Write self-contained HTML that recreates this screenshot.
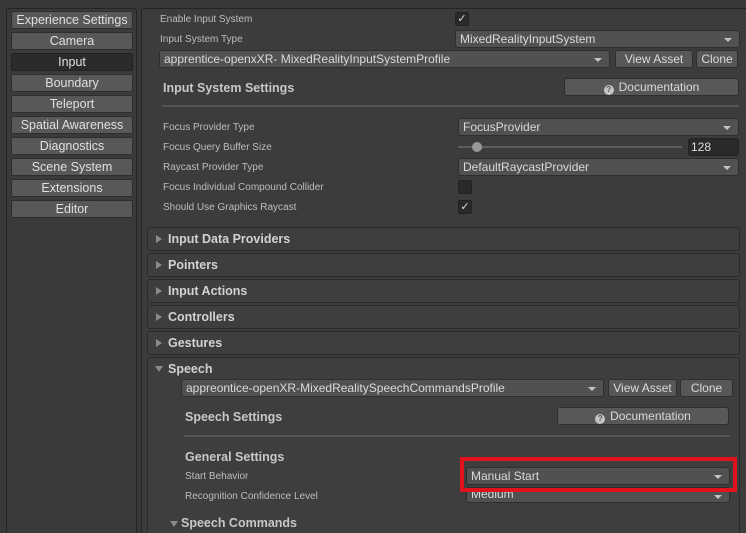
<!DOCTYPE html><html><head><style>
html,body{margin:0;width:746px;height:533px;overflow:hidden}
body{background:#383838;font-family:"Liberation Sans",sans-serif;position:relative;color:#c4c4c4}
.a{position:absolute;box-sizing:border-box}
.lp{left:6px;top:8px;width:131px;height:535px;border:1px solid #242424;background:#3a3a3a;border-radius:3px}
.nb{left:11px;width:122px;height:18px;background:#585858;border:1px solid #2e2e2e;border-radius:2px;font-size:12.5px;text-align:center;line-height:16px;color:#e0e0e0}
.rp{left:141px;top:8px;width:610px;height:535px;border:1px solid #242424;background:#3c3c3c;border-radius:3px}
.lb{font-size:10px;color:#bdbdbd}
.dd{height:18px;background:#515151;border:1px solid #2e2e2e;border-radius:3px;font-size:12px;line-height:16px;padding-left:4px;color:#dadada}
.dd:after{content:"";position:absolute;right:7px;top:7px;border-left:4px solid transparent;border-right:4px solid transparent;border-top:4px solid #c4c4c4}
.bt{height:18px;background:#585858;border:1px solid #2e2e2e;border-radius:3px;font-size:12px;line-height:16px;text-align:center;color:#dadada}
.cb{width:14px;height:14px;background:#2a2a2a;border:1px solid #222;border-radius:2px;color:#ddd;font-size:11px;line-height:12px;text-align:center}
.h{font-size:12.5px;font-weight:bold;color:#c8c8c8}
.hr{height:2px;background:#555}
.fo{left:147px;width:593px;height:24px;border:1px solid #2a2a2a;border-radius:3px;background:#3e3e3e;font-size:12.5px;font-weight:bold;color:#d2d2d2;line-height:22px;padding-left:20px}
.tri{position:absolute;left:8px;top:7px;border-top:4px solid transparent;border-bottom:4px solid transparent;border-left:6px solid #8a8a8a}
.q{display:inline-block;width:10px;height:10px;border-radius:50%;background:#c4c4c4;color:#585858;font-size:8px;line-height:10px;font-weight:bold;margin-right:5px;vertical-align:-1px}
</style></head><body>
<div class="a lp"></div>
<div class="a nb" style="top:11px">Experience Settings</div>
<div class="a nb" style="top:32px">Camera</div>
<div class="a nb" style="top:53px;background:#2b2b2b;border-color:#222">Input</div>
<div class="a nb" style="top:74px">Boundary</div>
<div class="a nb" style="top:95px">Teleport</div>
<div class="a nb" style="top:116px">Spatial Awareness</div>
<div class="a nb" style="top:137px">Diagnostics</div>
<div class="a nb" style="top:158px">Scene System</div>
<div class="a nb" style="top:179px">Extensions</div>
<div class="a nb" style="top:200px">Editor</div>
<div class="a rp"></div>
<div class="a lb" style="left:160px;top:14px">Enable Input System</div>
<div class="a cb" style="left:455px;top:12px">✓</div>
<div class="a lb" style="left:160px;top:34px">Input System Type</div>
<div class="a dd" style="left:455px;top:30px;width:285px">MixedRealityInputSystem</div>
<div class="a dd" style="left:159px;top:50px;width:451px">apprentice-openxXR- MixedRealityInputSystemProfile</div>
<div class="a bt" style="left:615px;top:50px;width:78px">View Asset</div>
<div class="a bt" style="left:696px;top:50px;width:42px">Clone</div>
<div class="a h" style="left:163px;top:81px">Input System Settings</div>
<div class="a bt" style="left:564px;top:78px;width:175px"><span class="q">?</span>Documentation</div>
<div class="a hr" style="left:162px;top:105px;width:577px"></div>
<div class="a lb" style="left:163px;top:122px">Focus Provider Type</div>
<div class="a dd" style="left:458px;top:118px;width:281px">FocusProvider</div>
<div class="a lb" style="left:163px;top:142px">Focus Query Buffer Size</div>
<div class="a" style="left:458px;top:146px;width:224px;height:2px;background:#5e5e5e"></div>
<div class="a" style="left:472px;top:142px;width:10px;height:10px;border-radius:50%;background:#999"></div>
<div class="a" style="left:688px;top:138px;width:51px;height:18px;background:#2a2a2a;border:1px solid #222;border-radius:3px;font-size:12px;line-height:16px;padding-left:2px;color:#ddd">128</div>
<div class="a lb" style="left:163px;top:162px">Raycast Provider Type</div>
<div class="a dd" style="left:458px;top:158px;width:281px">DefaultRaycastProvider</div>
<div class="a lb" style="left:163px;top:182px">Focus Individual Compound Collider</div>
<div class="a cb" style="left:458px;top:180px"></div>
<div class="a lb" style="left:163px;top:202px">Should Use Graphics Raycast</div>
<div class="a cb" style="left:458px;top:200px">✓</div>
<div class="a fo" style="top:227px"><span class="tri"></span>Input Data Providers</div>
<div class="a fo" style="top:253px"><span class="tri"></span>Pointers</div>
<div class="a fo" style="top:279px"><span class="tri"></span>Input Actions</div>
<div class="a fo" style="top:305px"><span class="tri"></span>Controllers</div>
<div class="a fo" style="top:331px"><span class="tri"></span>Gestures</div>
<div class="a fo" style="top:357px;height:190px"><span class="a" style="left:7px;top:8px;border-left:4px solid transparent;border-right:4px solid transparent;border-top:6px solid #8a8a8a"></span>Speech</div>
<div class="a dd" style="left:181px;top:379px;width:423px">appreontice-openXR-MixedRealitySpeechCommandsProfile</div>
<div class="a bt" style="left:608px;top:379px;width:69px">View Asset</div>
<div class="a bt" style="left:680px;top:379px;width:53px">Clone</div>
<div class="a h" style="left:185px;top:410px">Speech Settings</div>
<div class="a bt" style="left:557px;top:407px;width:172px"><span class="q">?</span>Documentation</div>
<div class="a hr" style="left:184px;top:435px;width:546px"></div>
<div class="a h" style="left:185px;top:450px">General Settings</div>
<div class="a lb" style="left:185px;top:471px">Start Behavior</div>
<div class="a dd" style="left:466px;top:467px;width:264px">Manual Start</div>
<div class="a lb" style="left:185px;top:491px">Recognition Confidence Level</div>
<div class="a dd" style="left:466px;top:487px;width:264px;height:16px;line-height:12px">Medium</div>
<div class="a" style="top:457px;height:35px;border:4px solid #e0121e;left:460px;width:277px"></div>
<div class="a h" style="left:170px;top:516px"><span style="display:inline-block;border-left:4px solid transparent;border-right:4px solid transparent;border-top:6px solid #8a8a8a;margin-right:3px"></span>Speech Commands</div>
</body></html>
